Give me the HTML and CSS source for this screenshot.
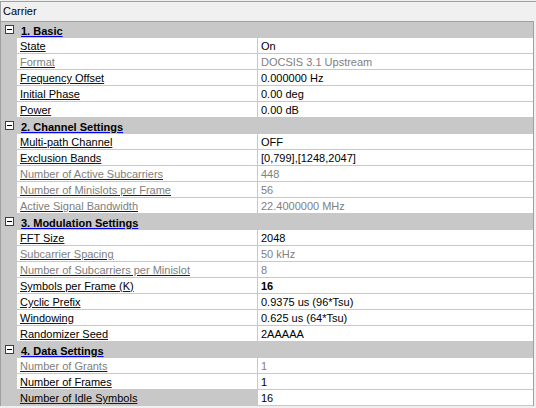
FILE: index.html
```html
<!DOCTYPE html>
<html>
<head>
    <title>Carrier</title>
    <link rel="stylesheet" href="styles.css">
</head>
<body>
    <div class="panel">
        <div class="title">Carrier</div>
        <div class="grid">
            <div class="cat">
                <span class="toggle"><svg width="9" height="9" viewBox="0 0 9 9"><rect x="0.5" y="0.5" width="8" height="8" fill="#fff" stroke="#3c3c3c"/><path d="M2 4.5h5" stroke="#000"/></svg></span>
                <span class="cat-label">1. Basic</span>
            </div>
            <div class="row"><div class="name"><span>State</span></div><div class="value">On</div></div>
            <div class="row off"><div class="name"><span>Format</span></div><div class="value">DOCSIS 3.1 Upstream</div></div>
            <div class="row"><div class="name"><span>Frequency Offset</span></div><div class="value">0.000000 Hz</div></div>
            <div class="row"><div class="name"><span>Initial Phase</span></div><div class="value">0.00 deg</div></div>
            <div class="row"><div class="name"><span>Power</span></div><div class="value">0.00 dB</div></div>

            <div class="cat">
                <span class="toggle"><svg width="9" height="9" viewBox="0 0 9 9"><rect x="0.5" y="0.5" width="8" height="8" fill="#fff" stroke="#3c3c3c"/><path d="M2 4.5h5" stroke="#000"/></svg></span>
                <span class="cat-label">2. Channel Settings</span>
            </div>
            <div class="row"><div class="name"><span>Multi-path Channel</span></div><div class="value">OFF</div></div>
            <div class="row"><div class="name"><span>Exclusion Bands</span></div><div class="value">[0,799],[1248,2047]</div></div>
            <div class="row off"><div class="name"><span>Number of Active Subcarriers</span></div><div class="value">448</div></div>
            <div class="row off"><div class="name"><span>Number of Minislots per Frame</span></div><div class="value">56</div></div>
            <div class="row off"><div class="name"><span>Active Signal Bandwidth</span></div><div class="value">22.4000000 MHz</div></div>

            <div class="cat">
                <span class="toggle"><svg width="9" height="9" viewBox="0 0 9 9"><rect x="0.5" y="0.5" width="8" height="8" fill="#fff" stroke="#3c3c3c"/><path d="M2 4.5h5" stroke="#000"/></svg></span>
                <span class="cat-label">3. Modulation Settings</span>
            </div>
            <div class="row"><div class="name"><span>FFT Size</span></div><div class="value">2048</div></div>
            <div class="row off"><div class="name"><span>Subcarrier Spacing</span></div><div class="value">50 kHz</div></div>
            <div class="row off"><div class="name"><span>Number of Subcarriers per Minislot</span></div><div class="value">8</div></div>
            <div class="row"><div class="name"><span>Symbols per Frame (K)</span></div><div class="value bold">16</div></div>
            <div class="row"><div class="name"><span>Cyclic Prefix</span></div><div class="value">0.9375 us (96*Tsu)</div></div>
            <div class="row"><div class="name"><span>Windowing</span></div><div class="value">0.625 us (64*Tsu)</div></div>
            <div class="row"><div class="name"><span>Randomizer Seed</span></div><div class="value">2AAAAA</div></div>

            <div class="cat">
                <span class="toggle"><svg width="9" height="9" viewBox="0 0 9 9"><rect x="0.5" y="0.5" width="8" height="8" fill="#fff" stroke="#3c3c3c"/><path d="M2 4.5h5" stroke="#000"/></svg></span>
                <span class="cat-label">4. Data Settings</span>
            </div>
            <div class="row off"><div class="name"><span>Number of Grants</span></div><div class="value">1</div></div>
            <div class="row"><div class="name"><span>Number of Frames</span></div><div class="value">1</div></div>
            <div class="row selected"><div class="name"><span>Number of Idle Symbols</span></div><div class="value">16</div></div>
        </div>
    </div>
</body>
</html>
```

FILE: styles.css
```css
body {
    margin: 0;
    background: #f0f0f0;
    font-family: "Liberation Sans", Arial, sans-serif;
    font-size: 11px;
    color: #000;
}
.panel {
    width: 535px;
    margin-top: 1px;
    border-top: 1px solid #a0a0a0;
    border-left: 1px solid #a0a0a0;
}
.title {
    height: 19px;
    line-height: 19px;
    padding-left: 2px;
    overflow: hidden;
}
.grid {
    width: 532px;
    border-top: 1px solid #a0a0a0;
    border-right: 1px solid #a0a0a0;
    background: #fff;
}
.cat {
    display: flex;
    height: 16px;
    background: #c8c8c8;
    overflow: hidden;
}
.toggle {
    width: 16px;
    padding: 3px 0 0 4px;
    box-sizing: border-box;
}
.toggle svg {
    display: block;
}
.cat-label {
    padding-left: 4px;
    line-height: 19px;
    font-weight: bold;
    text-decoration: underline;
    text-decoration-color: #0000ff;
}
.row {
    display: flex;
    height: 16px;
    padding-left: 16px;
    background: #c8c8c8;
}
.name, .value {
    box-sizing: border-box;
    height: 16px;
    line-height: 17px;
    padding-left: 3px;
    border-bottom: 1px solid #c8c8c8;
    background: #fff;
    white-space: nowrap;
    overflow: hidden;
}
.name {
    width: 241px;
    border-right: 1px solid #c8c8c8;
}
.name span {
    text-decoration: underline;
    text-decoration-color: #0000ff;
}
.value {
    flex: 1;
}
.off .name, .off .value {
    color: #808080;
}
.bold {
    font-weight: bold;
}
.selected .name {
    background: #c8c8c8;
}
```
